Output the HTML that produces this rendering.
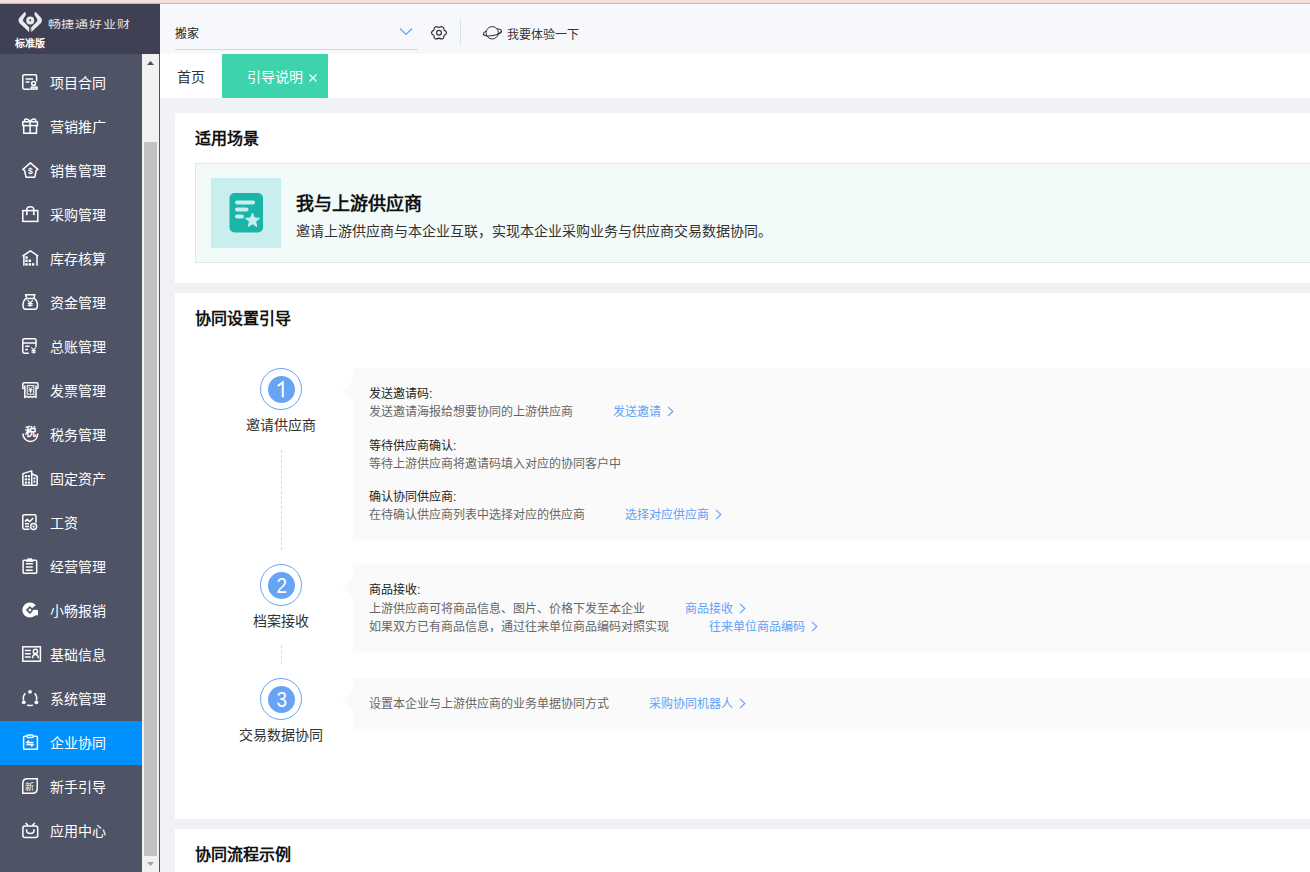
<!DOCTYPE html>
<html lang="zh-CN"><head><meta charset="utf-8">
<style>
*{margin:0;padding:0;box-sizing:border-box;}
html,body{width:1310px;height:872px;overflow:hidden;background:#f0f2f5;font-family:"Liberation Sans",sans-serif;}
.abs{position:absolute;}
#strip{left:0;top:0;width:1310px;height:4px;background:#f4e1dc;border-bottom:1px solid #c6b6b3;}
#shead{left:0;top:4px;width:160px;height:50px;background:#3f4054;}
#smenu{left:0;top:54px;width:142px;height:818px;background:#4f5366;}
#strack{left:142px;top:54px;width:17px;height:818px;background:#f1f1f1;}
#sline{left:159px;top:54px;width:1px;height:818px;background:#4f5366;}
#thumb{left:144px;top:142px;width:13px;height:714px;background:#c1c1c1;}
#topbar{left:160px;top:4px;width:1150px;height:50px;background:#f7f8fc;border-top:1px solid #fdfdfe;}
#tabbar{left:160px;top:54px;width:1150px;height:44px;background:#fff;}
.card{background:#fff;left:175px;width:1135px;}
.mi{position:absolute;left:0;width:142px;height:44px;}
.mi svg{position:absolute;left:22px;top:13px;width:16px;height:16px;overflow:visible;}
.mi span{position:absolute;left:50px;top:0;line-height:44px;font-size:14px;color:#fff;}
.mi.act{background:#0091ff;}
.mi.act #ic15 path[fill="#4f5366"]{fill:#0091ff;}
.t12{font-size:12px;}
.tx{position:absolute;white-space:nowrap;line-height:20px;}
.c3{color:#222;} .c6{color:#666;} .lk{color:#62a1f7;}
.h16{font-size:16px;font-weight:bold;color:#111;}
.panel{position:absolute;left:353px;width:957px;background:#fafafa;}
.panel:before{content:"";position:absolute;left:-10px;top:13px;border-right:10px solid #fafafa;border-top:10px solid transparent;border-bottom:10px solid transparent;}
.ring{position:absolute;left:260px;width:42px;height:42px;border:1px solid #69a5f5;border-radius:50%;}
.ring i{position:absolute;left:7px;top:7px;width:27px;height:27px;border-radius:50%;background:#68a4f4;color:#fff;font-style:normal;font-size:21px;line-height:27px;text-align:center;}
.dash{position:absolute;left:281px;width:0;border-left:1px dashed #d9d9d9;}
.slabel{position:absolute;left:181px;width:200px;text-align:center;font-size:14px;line-height:20px;color:#333;}
.chev{position:relative;margin-left:6px;vertical-align:-1px;}

</style></head><body>
<div id="strip" class="abs"></div>
<div id="shead" class="abs"></div>
<div id="smenu" class="abs"></div>
<div id="strack" class="abs"></div>
<div id="sline" class="abs"></div>
<div id="thumb" class="abs"></div>
<svg class="abs" style="left:142px;top:54px" width="17" height="17" viewBox="0 0 17 17"><path d="M5 11H12L8.5 7Z" fill="#505050"/></svg>
<svg class="abs" style="left:142px;top:855px" width="17" height="17" viewBox="0 0 17 17"><path d="M5 7H12L8.5 11Z" fill="#a3a3a3"/></svg>
<div id="topbar" class="abs"></div>
<div id="tabbar" class="abs"></div>

<!-- cards -->
<div class="abs card" style="top:113px;height:170px;"></div>
<div class="abs card" style="top:293px;height:526px;"></div>
<div class="abs card" style="top:829px;height:60px;"></div>


<!-- topbar -->
<div class="tx t12" style="left:175px;top:24px;color:#222;">搬家</div>
<div class="abs" style="left:175px;top:49px;width:243px;height:1px;background:#d9d9d9;"></div>
<svg class="abs" style="left:399px;top:27px" width="14" height="9" viewBox="0 0 14 9"><path d="M1 1.5 L7 7.5 L13 1.5" fill="none" stroke="#62a1f7" stroke-width="1.2"/></svg>
<svg id="gear" class="abs" style="left:430px;top:24px" width="18" height="18" viewBox="0 0 18 18"><path d="M14.11 6.15 Q19.00 8.80 14.11 11.46 Q14.00 16.59 9.00 14.11 Q4.00 16.59 3.89 11.46 Q-1.00 8.80 3.89 6.14 Q4.00 1.01 9.00 3.49 Q14.00 1.01 14.11 6.14Z" fill="none" stroke="#333" stroke-width="1.2" stroke-linejoin="round"/><circle cx="9" cy="8.8" r="2.4" fill="none" stroke="#333" stroke-width="1.2"/></svg>
<div class="abs" style="left:460px;top:20px;width:1px;height:25px;background:#dcdfe6;"></div>
<svg id="planet" class="abs" style="left:482px;top:24px" width="21" height="18" viewBox="0 0 21 18">
<g transform="rotate(-10.5 10.4 8.45)"><ellipse cx="10.4" cy="8.45" rx="9.3" ry="3.2" fill="none" stroke="#333" stroke-width="1"/></g>
<circle cx="10.2" cy="8.8" r="6.2" fill="#f7f8fc" stroke="#333" stroke-width="1"/>
<g transform="rotate(-10.5 10.4 8.45)"><path d="M1.1 8.45A9.3 3.2 0 0 0 19.7 8.45" fill="none" stroke="#333" stroke-width="1"/></g>
</svg>
<div class="tx t12" style="left:507px;top:25px;color:#333;">我要体验一下</div>

<!-- tabs -->
<div class="tx" style="left:177px;top:67px;font-size:14px;color:#333;">首页</div>
<div class="abs" style="left:222px;top:54px;width:106px;height:44px;background:#3dd4ad;"></div>
<div class="tx" style="left:247px;top:67px;font-size:14px;color:#fff;">引导说明</div>
<svg class="abs" style="left:308px;top:73px" width="10" height="10" viewBox="0 0 10 10"><path d="M1.5 1.5 L8.5 8.5 M8.5 1.5 L1.5 8.5" stroke="#fff" stroke-width="1.1"/></svg>

<!-- card 1 -->
<div class="tx h16" style="left:195px;top:129px;">适用场景</div>
<div class="abs" style="left:195px;top:163px;width:1115px;height:100px;background:#f2fafa;border:1px solid #d3edeb;border-right:none;"></div>
<div class="abs" style="left:211px;top:178px;width:70px;height:70px;background:#c8eeee;"></div>
<svg class="abs" style="left:229px;top:193px" width="34" height="40" viewBox="0 0 34 40">
<rect x="0.5" y="0" width="33.5" height="39.5" rx="5" fill="#1ab5a8"/>
<rect x="6" y="7.5" width="20" height="4" rx="2" fill="#c8eeee"/>
<rect x="6" y="14.5" width="13.5" height="4" rx="2" fill="#c8eeee"/>
<rect x="6" y="21.5" width="9" height="4" rx="2" fill="#c8eeee"/>
<path id="star" fill="#c8eeee" stroke="#c8eeee" stroke-width="1" stroke-linejoin="round" d="M23.50 20.20 L25.38 25.01 L30.54 25.31 L26.54 28.59 L27.85 33.59 L23.50 30.80 L19.15 33.59 L20.46 28.59 L16.46 25.31 L21.62 25.01Z"/>
</svg>
<div class="tx" style="left:296px;top:192px;font-size:18px;line-height:24px;font-weight:bold;color:#111;">我与上游供应商</div>
<div class="tx" style="left:296px;top:221px;font-size:14px;color:#333;">邀请上游供应商与本企业互联，实现本企业采购业务与供应商交易数据协同。</div>

<!-- card 2 -->
<div class="tx h16" style="left:195px;top:309px;">协同设置引导</div>

<div class="ring" style="top:368px"><i><svg width="27" height="27" style="position:absolute;left:0;top:0"><path d="M14.8 21.2V6.4L9.8 9.8" stroke="#fff" stroke-width="2" fill="none"/></svg></i></div>
<div class="slabel" style="top:415px">邀请供应商</div>
<div class="dash" style="top:450px;height:100px"></div>
<div class="panel" style="top:368px;height:172px"></div>
<div class="tx t12 c3" style="left:369px;top:384px">发送邀请码:</div>
<div class="tx t12 c6" style="left:369px;top:402px">发送邀请海报给想要协同的上游供应商</div>
<div class="tx t12 lk" style="left:613px;top:402px">发送邀请<svg class="chev" width="7" height="11" viewBox="0 0 7 11"><path d="M1 0.8 L5.8 5.5 L1 10.2" fill="none" stroke="#62a1f7" stroke-width="1.1"/></svg></div>
<div class="tx t12 c3" style="left:369px;top:436px">等待供应商确认:</div>
<div class="tx t12 c6" style="left:369px;top:454px">等待上游供应商将邀请码填入对应的协同客户中</div>
<div class="tx t12 c3" style="left:369px;top:487px">确认协同供应商:</div>
<div class="tx t12 c6" style="left:369px;top:505px">在待确认供应商列表中选择对应的供应商</div>
<div class="tx t12 lk" style="left:625px;top:505px">选择对应供应商<svg class="chev" width="7" height="11" viewBox="0 0 7 11"><path d="M1 0.8 L5.8 5.5 L1 10.2" fill="none" stroke="#62a1f7" stroke-width="1.1"/></svg></div>

<div class="ring" style="top:564px"><i><b style="display:inline-block;font-weight:normal;transform:scale(0.9,1.04)">2</b></i></div>
<div class="slabel" style="top:611px">档案接收</div>
<div class="dash" style="top:645px;height:19px"></div>
<div class="panel" style="top:564px;height:88px"></div>
<div class="tx t12 c3" style="left:369px;top:580px">商品接收:</div>
<div class="tx t12 c6" style="left:369px;top:599px">上游供应商可将商品信息、图片、价格下发至本企业</div>
<div class="tx t12 lk" style="left:685px;top:599px">商品接收<svg class="chev" width="7" height="11" viewBox="0 0 7 11"><path d="M1 0.8 L5.8 5.5 L1 10.2" fill="none" stroke="#62a1f7" stroke-width="1.1"/></svg></div>
<div class="tx t12 c6" style="left:369px;top:617px">如果双方已有商品信息，通过往来单位商品编码对照实现</div>
<div class="tx t12 lk" style="left:709px;top:617px">往来单位商品编码<svg class="chev" width="7" height="11" viewBox="0 0 7 11"><path d="M1 0.8 L5.8 5.5 L1 10.2" fill="none" stroke="#62a1f7" stroke-width="1.1"/></svg></div>

<div class="ring" style="top:678px"><i><b style="display:inline-block;font-weight:normal;transform:scale(0.9,1.04)">3</b></i></div>
<div class="slabel" style="top:725px">交易数据协同</div>
<div class="panel" style="top:678px;height:51px"></div>
<div class="tx t12 c6" style="left:369px;top:694px">设置本企业与上游供应商的业务单据协同方式</div>
<div class="tx t12 lk" style="left:649px;top:694px">采购协同机器人<svg class="chev" width="7" height="11" viewBox="0 0 7 11"><path d="M1 0.8 L5.8 5.5 L1 10.2" fill="none" stroke="#62a1f7" stroke-width="1.1"/></svg></div>

<!-- card 3 -->
<div class="tx h16" style="left:195px;top:845px;">协同流程示例</div>

<!-- logo -->
<svg id="logo" class="abs" style="left:14px;top:8px" width="32" height="28" viewBox="0 0 32 28">
<g fill="#e9e9ec">
<path d="M10.6 4.1Q12.7 5.1 11.6 7.3L9.3 11.1Q8.6 12.3 9.4 13.5L15.2 19.3L15 23.9L5.1 14.7Q3.5 12.3 5.1 10Z"/>
<path d="M21.8 4.1Q19.7 5.1 20.8 7.3L23.1 11.1Q23.8 12.3 23 13.5L17.2 19.3L17.4 23.9L27.3 14.7Q28.9 12.3 27.3 10Z"/>
<circle cx="16.2" cy="12.4" r="4"/>
</g>
<circle cx="16.2" cy="12.2" r="1" fill="#3f4054"/>
<rect x="15.7" y="19.5" width="1" height="4" fill="#8a8a96"/>
</svg>
<div class="tx" style="left:47.5px;top:14px;font-size:13px;color:#e6e6e6;letter-spacing:0.95px;transform:scaleY(0.8);transform-origin:0 15px;">畅捷通好业财</div>
<div class="tx" style="left:15px;top:34px;font-size:10px;color:#fff;font-weight:bold;">标准版</div>

<div id="menu" class="abs" style="left:0;top:0;width:142px;height:872px;">
<div class="mi" style="top:61px"><svg id="ic0" viewBox="0 0 16 16"><path d="M8.5 15.2H2.2Q0.8 15.2 0.8 13.8V2.2Q0.8 0.8 2.2 0.8H13.2Q14.6 0.8 14.6 2.2V7.5" stroke="#fff" stroke-width="1.5" fill="none"/><path d="M3.6 4.9H11M3.6 8.1H7.6" stroke="#fff" stroke-width="1.5" fill="none"/><circle cx="11.6" cy="9.4" r="1.9" stroke="#fff" stroke-width="1.5" fill="none"/><rect x="8.6" y="12.4" width="7.2" height="3.4" fill="#fff"/><rect x="10.2" y="13.6" width="4.2" height="1.2" fill="#c8c8d4"/></svg><span>项目合同</span></div>
<div class="mi" style="top:105px"><svg id="ic1" viewBox="0 0 16 16"><rect x="0.8" y="3.8" width="14.6" height="3.8" stroke="#fff" stroke-width="1.5" fill="none"/><path d="M1.7 7.6V15.2H14.5V7.6M8.1 3.8V15.2" stroke="#fff" stroke-width="1.5" fill="none"/><path d="M8.1 3.6C6.5 1.5 4.2 0.3 2.9 1.3C2.1 2 2.6 3.3 3.3 3.6M8.1 3.6C9.7 1.5 12 0.3 13.3 1.3C14.1 2 13.6 3.3 12.9 3.6" stroke="#fff" stroke-width="1.5" fill="none"/></svg><span>营销推广</span></div>
<div class="mi" style="top:149px"><svg id="ic2" viewBox="0 0 16 16"><path d="M8.4 0.9L0.9 7.4L2.6 8.5L4 15.2H12.8L14.2 8.5L15.9 7.4Z" stroke="#fff" stroke-width="1.5" fill="none" stroke-linejoin="round"/><text x="8.4" y="12.4" font-size="8.5" font-weight="bold" fill="#fff" text-anchor="middle" font-family="Liberation Sans">$</text></svg><span>销售管理</span></div>
<div class="mi" style="top:193px"><svg id="ic3" viewBox="0 0 16 16"><rect x="0.8" y="4.6" width="15" height="10.8" stroke="#fff" stroke-width="1.5" fill="none"/><path d="M4.8 8V3.8Q4.8 0.8 8.3 0.8Q11.8 0.8 11.8 3.8V8" stroke="#fff" stroke-width="1.5" fill="none"/><circle cx="4.8" cy="8.2" r="1" fill="#fff"/><circle cx="11.8" cy="8.2" r="1" fill="#fff"/></svg><span>采购管理</span></div>
<div class="mi" style="top:237px"><svg id="ic4" viewBox="0 0 16 16"><path d="M0.5 6.2L8.4 0.8L16.2 6.2" stroke="#fff" stroke-width="1.5" fill="none" stroke-linejoin="round"/><path d="M1.9 5.4V15.8M15 5.4V15.8" stroke="#fff" stroke-width="1.5" fill="none"/><g fill="#fff"><rect x="3.3" y="6.3" width="2.4" height="2.4"/><rect x="3.3" y="9.6" width="2.4" height="2.4"/><rect x="6.6" y="9.6" width="2.4" height="2.4"/><rect x="3.3" y="13.2" width="2.4" height="2.4"/><rect x="6.6" y="13.2" width="2.4" height="2.4"/><rect x="9.9" y="13.2" width="2.4" height="2.4"/></g></svg><span>库存核算</span></div>
<div class="mi" style="top:281px"><svg id="ic5" viewBox="0 0 16 16"><path d="M4.6 4.4L3.6 0.8H12.8L11.8 4.4" stroke="#fff" stroke-width="1.5" fill="none" stroke-linejoin="round"/><path d="M4.6 4.4H11.8C14.2 5.4 15.4 8.5 15.4 11.5C15.4 14 14.4 15.2 12.8 15.2H3.6C2 15.2 1 14 1 11.5C1 8.5 2.2 5.4 4.6 4.4Z" stroke="#fff" stroke-width="1.5" fill="none"/><path d="M5.6 6.2L8.2 9.2L10.8 6.2M8.2 9.2V12.8M5.8 9.6H10.6M5.8 11.4H10.6" stroke="#fff" stroke-width="1.2" fill="none"/></svg><span>资金管理</span></div>
<div class="mi" style="top:325px"><svg id="ic6" viewBox="0 0 16 16"><path d="M6.8 15.2H2.2Q0.8 15.2 0.8 13.8V2.2Q0.8 0.8 2.2 0.8H12.6Q14 0.8 14 2.2V8.8M0.8 4.9H14" stroke="#fff" stroke-width="1.5" fill="none"/><path d="M3.3 8.3H7.5M3.3 11.4H6" stroke="#fff" stroke-width="1.5" fill="none"/><path d="M9.3 9.4L11.6 12L13.9 9.4M11.6 12V15.8M9.5 12.6H13.7M9.5 14.3H13.7" stroke="#fff" stroke-width="1.1" fill="none"/></svg><span>总账管理</span></div>
<div class="mi" style="top:369px"><svg id="ic7" viewBox="0 0 16 16"><path d="M2.8 6.6H1.8Q0.8 6.6 0.8 5.4V2.2Q0.8 0.8 2.2 0.8H14.6Q16 0.8 16 2.2V5.4Q16 6.6 15 6.6H14" stroke="#fff" stroke-width="1.5" fill="none"/><path d="M2.8 3.6V15.4L4.8 14.4L6.8 15.4L8.4 14.4L10.2 15.4L12 14.4L14 15.4V3.6" stroke="#fff" stroke-width="1.5" fill="none"/><rect x="5.2" y="3.6" width="6.6" height="8.6" stroke="#fff" stroke-width="1" fill="none"/><path d="M6.4 4.8L8.5 7L10.6 4.8M8.5 7V10.8M6.6 7.6H10.4M6.6 9H10.4" stroke="#fff" stroke-width="1" fill="none"/></svg><span>发票管理</span></div>
<div class="mi" style="top:413px"><svg id="ic8" viewBox="0 0 16 16"><path d="M0.9 7.6C1 12.4 4.2 15.4 8.4 15.4C12.6 15.4 15.6 12.4 15.8 7.6" stroke="#fff" stroke-width="1.5" fill="none"/><text x="8.2" y="10.2" font-size="11.5" font-weight="bold" fill="#fff" text-anchor="middle">税</text></svg><span>税务管理</span></div>
<div class="mi" style="top:457px"><svg id="ic9" viewBox="0 0 16 16"><path d="M9.7 15.2H1.6Q0.9 15.2 0.9 14.5V3.6L9.7 0.9V15.2H14.2Q15.2 15.2 15.2 14.2V6.2L9.7 3.8" stroke="#fff" stroke-width="1.5" fill="none" stroke-linejoin="round"/><g fill="#fff"><rect x="2.8" y="5.2" width="2.2" height="2"/><rect x="5.8" y="5.2" width="2.2" height="2"/><rect x="2.8" y="8.4" width="2.2" height="2"/><rect x="5.8" y="8.4" width="2.2" height="2"/><rect x="2.8" y="11.6" width="2.2" height="2"/><rect x="5.8" y="11.6" width="2.2" height="2"/><rect x="11.4" y="7.4" width="2" height="2"/><rect x="11.4" y="10.6" width="2" height="2"/></g></svg><span>固定资产</span></div>
<div class="mi" style="top:501px"><svg id="ic10" viewBox="0 0 16 16"><path d="M7.4 15.2H2.2Q0.8 15.2 0.8 13.8V2.2Q0.8 0.8 2.2 0.8H12.6Q14 0.8 14 2.2V8.8" stroke="#fff" stroke-width="1.5" fill="none"/><path d="M3 7.6L5.2 5.4L7.6 7.8L11.2 4" stroke="#fff" stroke-width="1.5" fill="none" stroke-linejoin="round"/><path d="M3 9.8H7M3 12.6H7" stroke="#fff" stroke-width="1.5" fill="none"/><circle cx="11.6" cy="12.6" r="3" stroke="#fff" stroke-width="1.5" fill="none"/><circle cx="11.6" cy="12.6" r="1.1" fill="#fff"/></svg><span>工资</span></div>
<div class="mi" style="top:545px"><svg id="ic11" viewBox="0 0 16 16"><path d="M4.6 2.2H2.2Q1.1 2.2 1.1 3.3V14.2Q1.1 15.3 2.2 15.3H13.6Q14.7 15.3 14.7 14.2V3.3Q14.7 2.2 13.6 2.2H11" stroke="#fff" stroke-width="1.5" fill="none"/><path d="M4.2 3.4L5.6 0.8H9.8L11.2 3.4Z" fill="#fff" stroke="#fff" stroke-width="0.8" stroke-linejoin="round"/><path d="M3.8 5.8H10.8M3.8 9H10.8M3.8 12.3H10.8" stroke="#fff" stroke-width="1.5" fill="none"/></svg><span>经营管理</span></div>
<div class="mi" style="top:589px"><svg id="ic12" viewBox="0 0 16 16"><circle cx="7.9" cy="8" r="7.6" fill="#fff"/><path d="M7.9 3.9L11.9 8L7.9 12.1L3.8 8Z" fill="#4f5366"/><path d="M7.9 8L16 1.5V7.8Z" fill="#4f5366"/><path d="M7.9 6.3L9.6 8L7.9 9.7L6.2 8Z" fill="#fff"/><rect x="10.6" y="8.3" width="5.4" height="5" fill="#fff"/></svg><span>小畅报销</span></div>
<div class="mi" style="top:633px"><svg id="ic13" viewBox="0 0 20 16" style="width:20px"><rect x="0.8" y="0.8" width="17.6" height="14.4" stroke="#fff" stroke-width="1.5" fill="none"/><path d="M2.8 4.6H8.8M2.8 7.8H8.8M2.8 11H8.8" stroke="#fff" stroke-width="1.5" fill="none"/><circle cx="13.4" cy="5.4" r="2.1" stroke="#fff" stroke-width="1.5" fill="none"/><path d="M10.6 12.2Q10.6 8.6 13.4 8.6Q16.2 8.6 16.2 12.2" stroke="#fff" stroke-width="1.5" fill="none"/></svg><span>基础信息</span></div>
<div class="mi" style="top:677px"><svg id="ic14" viewBox="0 0 16 16"><path d="M3.4 3.4A6.9 6.9 0 0 0 1.6 10.2M12.6 3.4A6.9 6.9 0 0 1 14.4 10.2M5.2 15A6.9 6.9 0 0 0 10.8 15" stroke="#fff" stroke-width="1.5" fill="none"/><circle cx="8" cy="1.8" r="1.9" fill="#fff"/><circle cx="1.8" cy="12.3" r="1.9" fill="#fff"/><circle cx="14.4" cy="12.3" r="1.9" fill="#fff"/></svg><span>系统管理</span></div>
<div class="mi act" style="top:721px"><svg id="ic15" viewBox="0 0 16 16"><path d="M4 2.2H2.6Q1.6 2.2 1.6 3.3V14.2Q1.6 15.3 2.6 15.3H14.4Q15.4 15.3 15.4 14.2V3.3Q15.4 2.2 14.4 2.2H12.2" stroke="#fff" stroke-width="1.5" fill="none"/><rect x="4.8" y="0.9" width="6.6" height="2.6" rx="1.3" stroke="#fff" stroke-width="1.5" fill="none"/><path d="M4.4 8.6H11.6M4.4 10.6H11.6" stroke="#fff" stroke-width="1.5" fill="none"/><path d="M4.3 8.6L6.6 6.2V8.6Z" fill="#fff" stroke="#fff" stroke-width="0.6"/><path d="M11.7 10.6L9.4 13V10.6Z" fill="#fff" stroke="#fff" stroke-width="0.6"/></svg><span>企业协同</span></div>
<div class="mi" style="top:765px"><svg id="ic16" viewBox="0 0 16 16"><path d="M5.4 0.8H15.2V10.4Q15.2 15.2 10.4 15.2H0.8V5.4Q0.8 0.8 5.4 0.8Z" stroke="#fff" stroke-width="1.5" fill="none"/><text x="7.8" y="11.9" font-size="9" fill="#fff" text-anchor="middle">新</text></svg><span>新手引导</span></div>
<div class="mi" style="top:809px"><svg id="ic17" viewBox="0 0 16 16"><rect x="0.9" y="4" width="14.8" height="11.4" rx="2" stroke="#fff" stroke-width="1.5" fill="none"/><path d="M3.6 0.9L6 3.6M12.8 0.9L10.4 3.6" stroke="#fff" stroke-width="1.5" fill="none"/><path d="M4.6 7.2V8.6Q4.6 11.6 8.3 11.6Q12 11.6 12 8.6V7.2" stroke="#fff" stroke-width="1.5" fill="none"/></svg><span>应用中心</span></div>
</div>
</body></html>
